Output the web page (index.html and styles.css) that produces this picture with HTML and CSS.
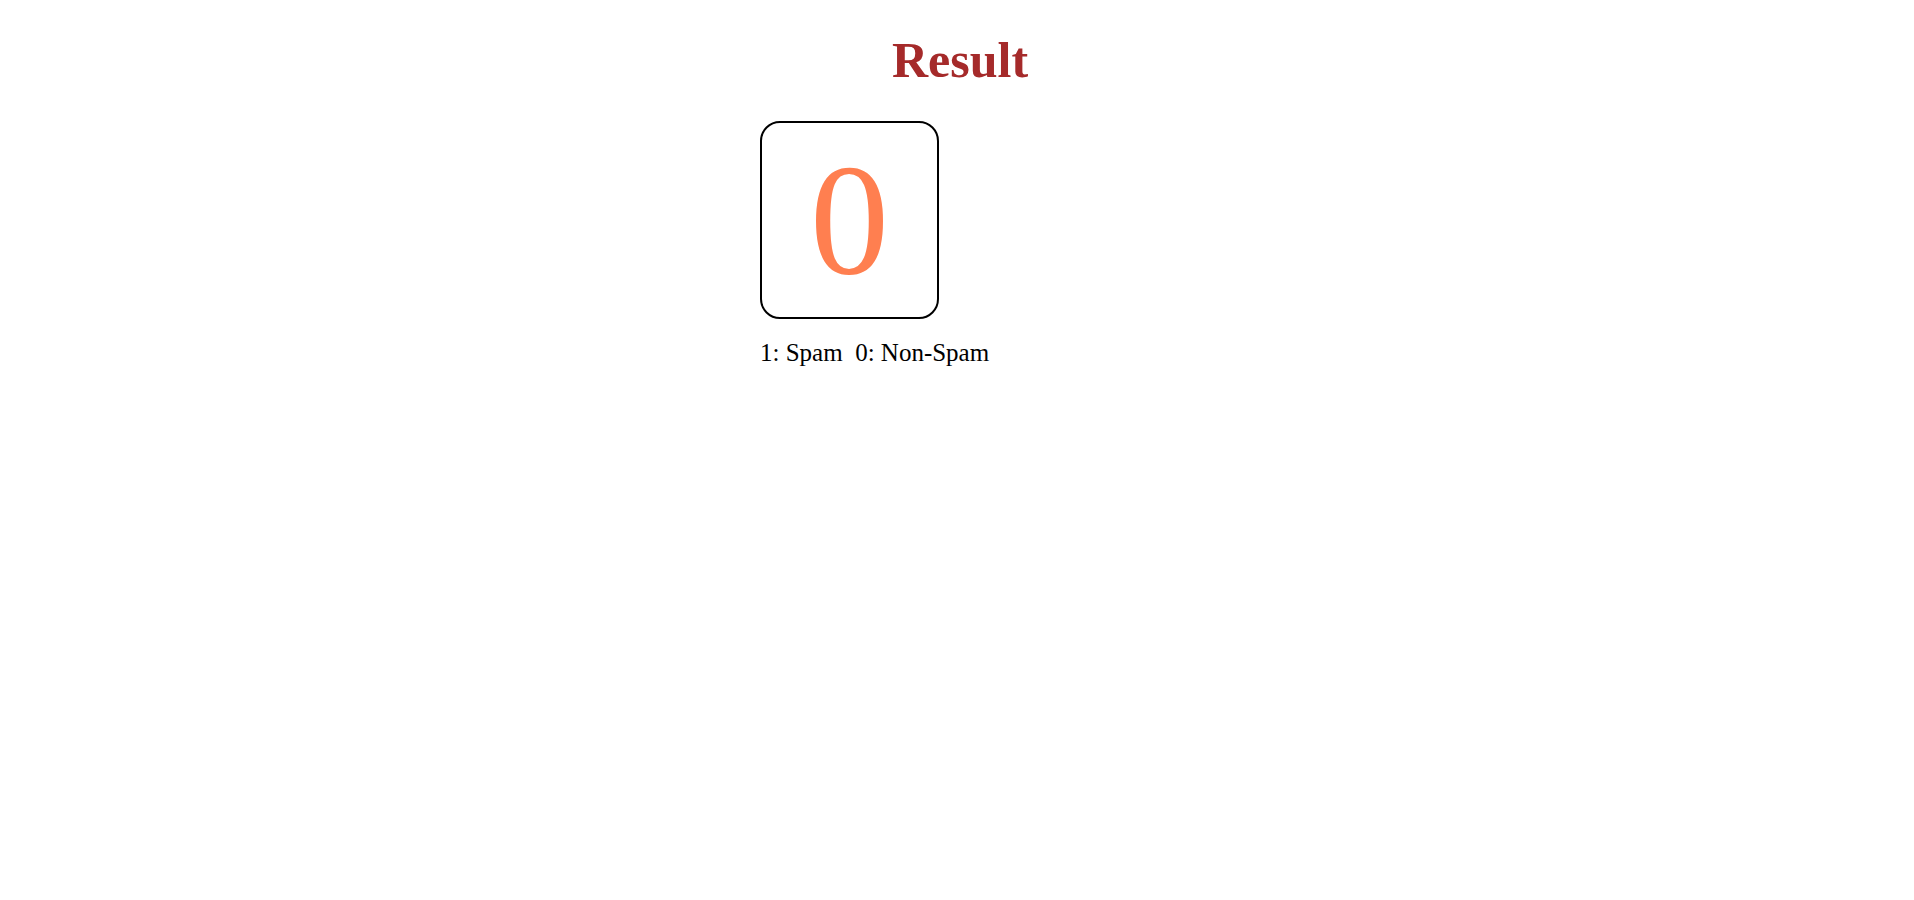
FILE: index.html
```html
<!DOCTYPE html>
<html lang="en">
<head>
<meta charset="utf-8">
<title>Result</title>
<link rel="stylesheet" href="styles.css">
</head>
<body>
  <h1 class="title">Result</h1>
  <main class="result">
    <div class="result-box">
      <span class="result-value">0</span>
    </div>
    <p class="legend">1: Spam&nbsp;&nbsp;0: Non-Spam</p>
  </main>
</body>
</html>
```

FILE: styles.css
```css
html, body {
  margin: 0;
  padding: 0;
  background: #ffffff;
}

body {
  font-family: "Liberation Serif", "Times New Roman", serif;
  color: #000000;
}

.title {
  margin: 30px 0 0 0;
  padding-left: 6px;
  font-size: 50px;
  line-height: 60px;
  font-weight: bold;
  text-align: center;
  color: #a52a2a;
}

.result {
  width: 394px;
  margin: 31px auto 0 auto;
  box-sizing: border-box;
}

.result-box {
  box-sizing: border-box;
  width: 179px;
  height: 198px;
  border: 2px solid #000000;
  border-radius: 20px;
  display: flex;
  align-items: center;
  justify-content: center;
}

.result-value {
  font-size: 158px;
  line-height: 1;
  color: #ff7f50;
}

.legend {
  margin: 20px 0 0 0;
  font-size: 25px;
  line-height: 28px;
}
```
